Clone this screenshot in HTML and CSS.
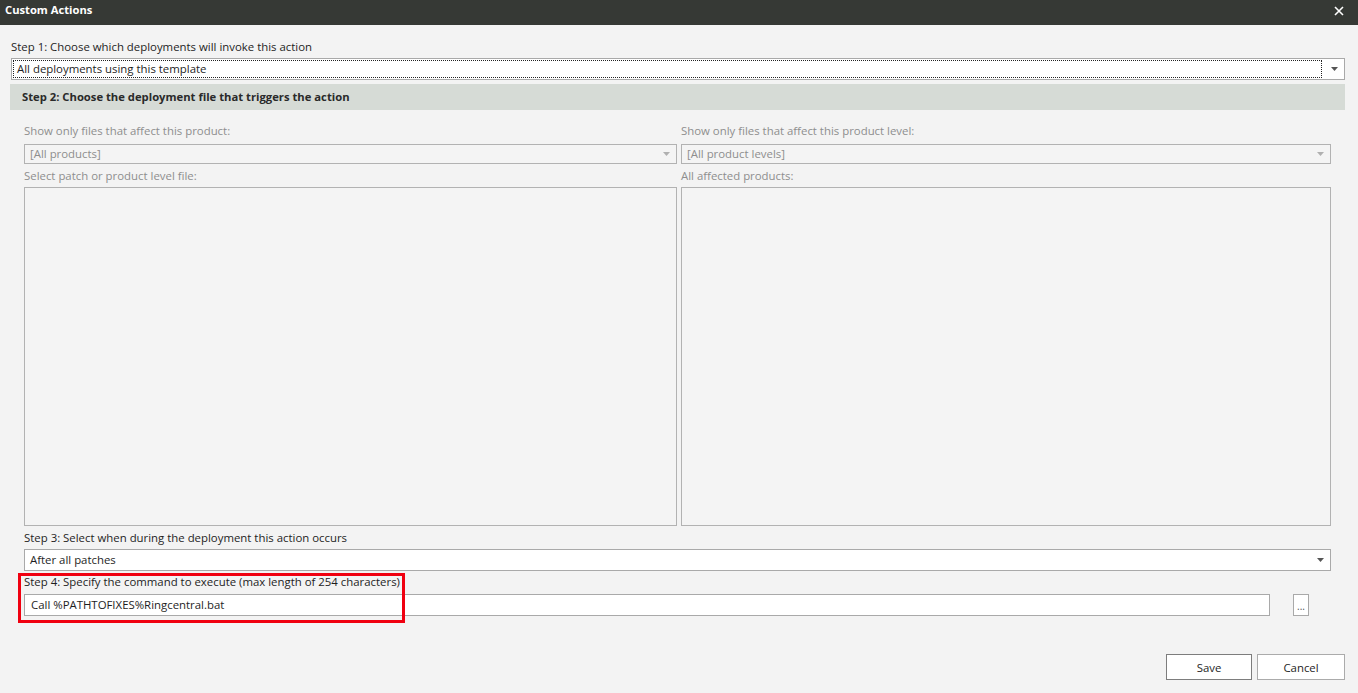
FILE: index.html
```html
<!DOCTYPE html>
<html>
<head>
<meta charset="utf-8">
<link rel="stylesheet" href="styles.css">
</head>
<body>
<div class="window">
  <div class="titlebar">
    <span class="title">Custom Actions</span>
    <svg class="close" width="10" height="10" viewBox="0 0 10 10"><path d="M1 1L9 9M9 1L1 9" stroke="#ffffff" stroke-width="1.6"/></svg>
  </div>
  <div class="content">
    <div class="label step1">Step 1: Choose which deployments will invoke this action</div>
    <div class="select select-main">
      <div class="focus">All deployments using this template</div>
      <svg class="arrow" width="7" height="4" viewBox="0 0 7 4"><path d="M0 0H7L3.5 4Z" fill="#555"/></svg>
    </div>
    <div class="step2">Step 2: Choose the deployment file that triggers the action</div>
    <div class="panel">
      <div class="cols">
        <div class="col">
          <div class="label dis first">Show only files that affect this product:</div>
          <div class="select dsel"><span>[All products]</span><svg class="arrow" width="7" height="4" viewBox="0 0 7 4"><path d="M0 0H7L3.5 4Z" fill="#b0b0b0"/></svg></div>
          <div class="label dis">Select patch or product level file:</div>
          <div class="listbox"></div>
        </div>
        <div class="col">
          <div class="label dis first">Show only files that affect this product level:</div>
          <div class="select dsel"><span>[All product levels]</span><svg class="arrow" width="7" height="4" viewBox="0 0 7 4"><path d="M0 0H7L3.5 4Z" fill="#b0b0b0"/></svg></div>
          <div class="label dis">All affected products:</div>
          <div class="listbox"></div>
        </div>
      </div>
      <div class="label step3">Step 3: Select when during the deployment this action occurs</div>
      <div class="select wsel"><span>After all patches</span><svg class="arrow" width="7" height="4" viewBox="0 0 7 4"><path d="M0 0H7L3.5 4Z" fill="#555"/></svg></div>
      <div class="step4">
        <div class="label s4label">Step 4: Specify the command to execute (max length of 254 characters)</div>
        <div class="cmdrow">
          <div class="input">Call %PATHTOFIXES%Ringcentral.bat</div>
          <div class="browse">...</div>
        </div>
        <div class="highlight"></div>
      </div>
    </div>
    <div class="footer">
      <div class="btn save">Save</div>
      <div class="btn cancel">Cancel</div>
    </div>
  </div>
</div>
</body>
</html>
```
FILE: styles.css
```css
* { box-sizing: border-box; }
html, body { margin: 0; padding: 0; }
body {
  width: 1358px;
  height: 693px;
  background: #f3f3f3;
  font-family: "Open Sans", "Noto Sans", sans-serif;
  font-size: 11.4px;
  color: #1e1e1e;
  overflow: hidden;
}
.titlebar {
  height: 25px;
  background: #363935;
  display: flex;
  align-items: center;
  justify-content: space-between;
  padding: 0 14px 0 5px;
}
.title {
  color: #ffffff;
  font-weight: 700;
  font-size: 11.2px;
  margin-top: -6px;
}
.close { margin-top: -4px; }
.content {
  padding: 0 13px 0 10px;
}
.label {
  height: 16px;
  line-height: 16px;
  white-space: nowrap;
}
.step1 { margin-top: 14px; margin-left: 1px; }
.select {
  display: flex;
  align-items: center;
  justify-content: space-between;
  border: 1px solid #a9a9a9;
  background: #ffffff;
  height: 22px;
}
.select-main {
  margin-top: 3px;
  margin-left: 1px;
  padding: 1px 0 1px 1px;
}
.focus {
  flex: 1;
  height: 100%;
  border: 1px dotted #222;
  padding-left: 3px;
  line-height: 16px;
}
.arrow { margin: 0 6px 0 9px; }
.step2 {
  margin-top: 4px;
  height: 26px;
  line-height: 26px;
  background: #d6dbd6;
  padding-left: 12px;
  font-weight: 700;
  font-size: 11.25px;
  color: #2a2a2a;
}
.panel {
  padding: 0 14px;
}
.cols {
  display: grid;
  grid-template-columns: 653px 1fr;
  column-gap: 4px;
}
.col { display: flex; flex-direction: column; }
.dis { color: #8e8e8e; margin-top: 4px; }
.dis.first { margin-top: 13px; }
.dsel {
  margin-top: 5px;
  height: 20px;
  background: #f4f4f4;
  border-color: #b2b2b2;
  color: #8e8e8e;
  padding-left: 5px;
}
.dsel span { margin-top: -2px; }
.listbox {
  margin-top: 3px;
  height: 339px;
  border: 1px solid #b2b2b2;
  background: #f4f4f4;
}
.step3 { margin-top: 4px; }
.wsel {
  margin-top: 3px;
  padding-left: 5px;
}
.wsel span { margin-top: -1px; }
.step4 { position: relative; }
.s4label { margin-top: 3px; }
.cmdrow {
  display: flex;
  margin-top: 4px;
}
.input {
  flex: 1;
  height: 22px;
  line-height: 20px;
  border: 1px solid #a9a9a9;
  background: #ffffff;
  padding-left: 6px;
  margin-right: 23px;
}
.browse {
  width: 16px;
  height: 22px;
  border: 1px solid #a9a9a9;
  background: #ffffff;
  font-size: 10px;
  line-height: 22px;
  text-align: center;
  color: #555;
  margin-right: 22px;
}
.highlight {
  position: absolute;
  left: -6px;
  top: -1px;
  width: 387px;
  height: 50px;
  border: 3px solid #f00010;
  pointer-events: none;
}
.footer {
  display: flex;
  justify-content: flex-end;
  gap: 5px;
  margin-top: 38px;
}
.btn {
  height: 26px;
  line-height: 25px;
  text-align: center;
  background: #ffffff;
  border: 1px solid #ababab;
}
.save { width: 86px; border-color: #7d7d7d; }
.cancel { width: 88px; }
```
